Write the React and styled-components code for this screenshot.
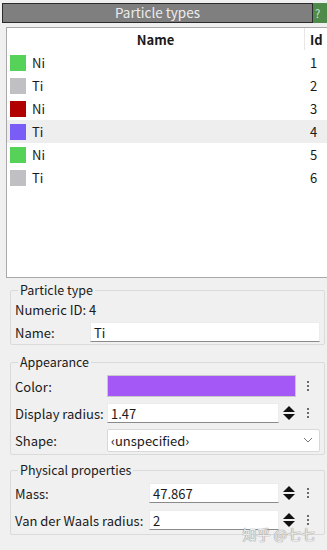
import React from 'react';
import styled, { createGlobalStyle } from 'styled-components';

const GlobalStyle = createGlobalStyle`
  html, body {
    margin: 0;
    padding: 0;
    background: #f0f0f0;
  }
  body {
    font-family: "Noto Sans CJK SC", "Noto Sans", sans-serif;
    font-size: 12px;
    color: #1a1a1a;
  }
`;

const particles = [
  { name: 'Ni', id: 1, color: '#56d259' },
  { name: 'Ti', id: 2, color: '#c0c0c4' },
  { name: 'Ni', id: 3, color: '#b00000' },
  { name: 'Ti', id: 4, color: '#7a5cf6' },
  { name: 'Ni', id: 5, color: '#56d259' },
  { name: 'Ti', id: 6, color: '#c0c0c4' },
];

const Root = styled.div`
  position: relative;
`;

const Panel = styled.div`
  width: 327px;
  height: 550px;
  overflow: hidden;
  display: flex;
  flex-direction: column;
  padding-top: 3px;
  box-sizing: border-box;
`;

const TitleBar = styled.div`
  display: flex;
  height: 20px;
  margin-left: 2px;
`;

const Title = styled.div`
  flex: 1;
  background: #7f7f7f;
  border: 1px solid #2b2b2b;
  color: #ececec;
  font-size: 13.5px;
  line-height: 1;
  display: flex;
  align-items: center;
  justify-content: center;
`;

const Help = styled.div`
  width: 12px;
  background: #4e8a4a;
  color: #d6e8d4;
  font-size: 11px;
  display: flex;
  align-items: center;
  padding-left: 2px;
`;

const ListView = styled.div`
  margin: 4px -4px 0 6px;
  height: 249px;
  background: #fff;
  border: 1px solid #a8a8a8;
  border-right: none;
  display: flex;
  flex-direction: column;
`;

const HeaderRow = styled.div`
  display: grid;
  grid-template-columns: 298px 1fr;
  height: 22px;
  font-weight: bold;
  font-size: 13px;
  margin-bottom: 1px;
`;

const HeaderCell = styled.div`
  display: flex;
  align-items: center;
  justify-content: ${(p) => (p.$left ? 'flex-start' : 'center')};
  padding-left: ${(p) => (p.$left ? '5px' : '0')};
  border-right: ${(p) => (p.$left ? 'none' : '1px solid #e6e6e6')};
`;

const Row = styled.div`
  display: grid;
  grid-template-columns: 298px 1fr;
  height: 23px;
  align-items: center;
  background: ${(p) => (p.$selected ? '#eeeeee' : 'transparent')};
`;

const NameCell = styled.div`
  display: flex;
  align-items: center;
  gap: 6px;
  padding-left: 3px;
  font-size: 13px;
`;

const Swatch = styled.span`
  width: 16px;
  height: 16px;
  background: ${(p) => p.$color};
`;

const IdCell = styled.div`
  padding-left: 5px;
  font-size: 13px;
`;

const Group = styled.fieldset`
  margin: ${(p) => p.$top || 7}px 2px 0 10px;
  padding: ${(p) => p.$pad || 3}px 4px 2px 4px;
  border: 1px solid #dadada;
  border-radius: 2px;
  display: flex;
  flex-direction: column;
  gap: ${(p) => (p.$gap === undefined ? 3 : p.$gap)}px;
  min-width: 0;
`;

const Legend = styled.legend`
  padding: 0 2px;
  margin-left: 3px;
  font-size: 12.5px;
  line-height: 16px;
`;

const FieldRow = styled.div`
  display: grid;
  grid-template-columns: ${(p) => p.$label}px 1fr ${(p) => (p.$extra ? '24px' : '0px')};
  align-items: center;
  height: ${(p) => p.$h || 24}px;
  font-size: 13px;
`;

const Label = styled.span`
  white-space: nowrap;
`;

const InputWrap = styled.div`
  display: flex;
  align-items: center;
  gap: 3px;
`;

const TextBox = styled.div`
  flex: 1;
  height: 20px;
  background: #fff;
  border: 1px solid #ececec;
  border-bottom: 1px solid #8a8a8a;
  box-sizing: border-box;
  display: flex;
  align-items: center;
  padding-left: 3px;
  font-size: 13px;
`;

const ColorBox = styled.div`
  height: 22px;
  background: #a459f6;
  border: 1px solid #c9c9c9;
  box-sizing: border-box;
`;

const Spinner = styled.div`
  width: 14px;
  height: 20px;
  display: flex;
  flex-direction: column;
  align-items: center;
  justify-content: center;
  gap: 2px;
`;

const Arrow = styled.span`
  width: 0;
  height: 0;
  border-left: 6px solid transparent;
  border-right: 6px solid transparent;
  ${(p) => (p.$down ? 'border-top: 6px solid #111;' : 'border-bottom: 6px solid #111;')}
`;

const Dots = styled.span`
  display: flex;
  flex-direction: column;
  align-items: center;
  gap: 2px;
  & > i {
    width: 2px;
    height: 2px;
    background: #6a6a6a;
  }
`;

const Combo = styled.div`
  height: 23px;
  background: #fff;
  border: 1px solid #d8d8d8;
  border-radius: 2px;
  box-sizing: border-box;
  display: flex;
  align-items: center;
  justify-content: space-between;
  padding: 0 6px 0 3px;
  font-size: 13px;
`;

const Watermark = styled.span`
  position: absolute;
  right: 12px;
  bottom: 6px;
  color: rgba(255, 255, 255, 0.85);
  text-shadow: 0 0 1px #888, 0 0 1px #888;
  font-size: 14px;
  font-family: "Noto Sans CJK SC", sans-serif;
`;

function More() {
  return (
    <Dots>
      <i />
      <i />
      <i />
    </Dots>
  );
}

function SpinBox({ value }) {
  return (
    <InputWrap>
      <TextBox>{value}</TextBox>
      <Spinner>
        <Arrow />
        <Arrow $down />
      </Spinner>
    </InputWrap>
  );
}

export default function App() {
  return (
    <Root>
      <GlobalStyle />
      <Panel>
        <TitleBar>
          <Title>Particle types</Title>
          <Help>?</Help>
        </TitleBar>
        <ListView>
          <HeaderRow>
            <HeaderCell>Name</HeaderCell>
            <HeaderCell $left>Id</HeaderCell>
          </HeaderRow>
          {particles.map((p) => (
            <Row key={p.id} $selected={p.id === 4}>
              <NameCell>
                <Swatch $color={p.color} />
                {p.name}
              </NameCell>
              <IdCell>{p.id}</IdCell>
            </Row>
          ))}
        </ListView>

        <Group $top={4} $pad={1} $gap={3}>
          <Legend>Particle type</Legend>
          <FieldRow $label={75} $h={20}>
            <Label>Numeric ID: 4</Label>
            <span />
            <span />
          </FieldRow>
          <FieldRow $label={75} $h={20}>
            <Label>Name:</Label>
            <TextBox>Ti</TextBox>
            <span />
          </FieldRow>
        </Group>

        <Group $top={9} $pad={4}>
          <Legend>Appearance</Legend>
          <FieldRow $label={92} $extra>
            <Label>Color:</Label>
            <ColorBox />
            <More />
          </FieldRow>
          <FieldRow $label={92} $extra>
            <Label>Display radius:</Label>
            <SpinBox value="1.47" />
            <More />
          </FieldRow>
          <FieldRow $label={92}>
            <Label>Shape:</Label>
            <Combo>
              <span>‹unspecified›</span>
              <svg width="10" height="6" viewBox="0 0 10 6">
                <path d="M1 1 L5 5 L9 1" fill="none" stroke="#777" strokeWidth="1" />
              </svg>
            </Combo>
            <span />
          </FieldRow>
        </Group>

        <Group $top={7} $pad={3}>
          <Legend>Physical properties</Legend>
          <FieldRow $label={134} $extra>
            <Label>Mass:</Label>
            <SpinBox value="47.867" />
            <More />
          </FieldRow>
          <FieldRow $label={134} $extra>
            <Label>Van der Waals radius:</Label>
            <SpinBox value="2" />
            <More />
          </FieldRow>
        </Group>
      </Panel>
      <Watermark>知乎 @七七</Watermark>
    </Root>
  );
}
